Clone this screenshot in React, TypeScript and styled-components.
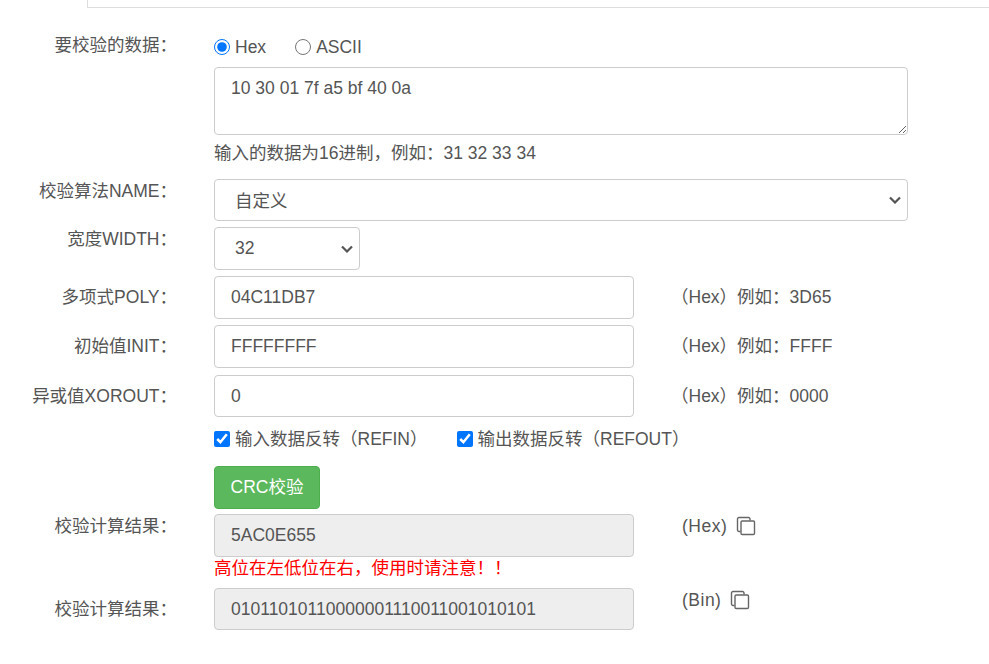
import React from "react";
import styled, { createGlobalStyle } from "styled-components";

const Global = createGlobalStyle`
  html, body { margin: 0; padding: 0; background: #fff; }
  body {
    font-family: "Liberation Sans", "Noto Sans CJK SC", sans-serif;
    font-size: 17.5px;
    color: #555;
    overflow: hidden;
  }
`;

const Page = styled.div`
  width: 989px;
  height: 664px;
  overflow: hidden;
`;

const TopPanel = styled.div`
  height: 7px;
  margin-left: 87px;
  border: 1px solid #ddd;
  border-top: none;
  border-right: none;
`;

const Form = styled.form`
  display: flex;
  flex-direction: column;
  padding-top: 26px;
`;

const Row = styled.div<{ $h: number; $mb?: number }>`
  display: grid;
  grid-template-columns: 177px 694px;
  column-gap: 37px;
  height: ${(p) => p.$h}px;
  margin-bottom: ${(p) => p.$mb ?? 0}px;
`;

const Label = styled.label<{ $top?: number }>`
  text-align: right;
  line-height: 22px;
  padding-top: ${(p) => p.$top ?? 0}px;
  white-space: nowrap;
`;

const Field = styled.div`
  display: flex;
  align-items: flex-start;
  min-width: 0;
`;

const Option = styled.label<{ $gap: number }>`
  display: inline-flex;
  align-items: center;
  line-height: 22px;
  margin-right: ${(p) => p.$gap}px;
  white-space: nowrap;
`;

const RadioField = styled(Field)`
  padding-top: 2px;
`;

const Radio = styled.input.attrs({ type: "radio" })`
  width: 16px;
  height: 16px;
  margin: 0 5px 0 0;
  flex: none;
`;

const Check = styled.input.attrs({ type: "checkbox" })`
  width: 16px;
  height: 16px;
  margin: 0 5px 0 0;
  flex: none;
`;

const control = `
  box-sizing: border-box;
  border: 1px solid #ccc;
  border-radius: 4px;
  font: inherit;
  color: #555;
  background-color: #fff;
  outline: none;
`;

const TextArea = styled.textarea`
  ${control}
  width: 694px;
  height: 68px;
  padding: 7px 16px;
  line-height: 26px;
  resize: vertical;
  display: block;
`;

const chevron =
  "url(\"data:image/svg+xml;utf8,<svg xmlns='http://www.w3.org/2000/svg' width='12' height='8' viewBox='0 0 12 8'><path d='M1 1.500l5 5 5-5' fill='none' stroke='%23555' stroke-width='2.200'/></svg>\")";

const Select = styled.select<{ $w: number; $shift: number }>`
  ${control}
  appearance: none;
  width: ${(p) => p.$w}px;
  height: 100%;
  padding: ${(p) => (p.$shift > 0 ? p.$shift : 0)}px 24px ${(p) => (p.$shift < 0 ? -p.$shift : 0)}px 20px;
  background-image: ${chevron};
  background-repeat: no-repeat;
  background-position: right 6px center;
`;

const Input = styled.input`
  ${control}
  width: 420px;
  height: 100%;
  padding: 0 16px;
`;

const ResultInput = styled(Input)`
  background-color: #eee;
`;

const Hint = styled.span`
  margin-left: 37px;
  line-height: 42px;
  white-space: nowrap;
`;

const ResultHint = styled.span<{ $gap: number }>`
  display: inline-flex;
  align-items: center;
  gap: ${(p) => p.$gap}px;
  margin-left: 48px;
  margin-top: 1px;
  line-height: 22px;
  letter-spacing: 0.5px;
  white-space: nowrap;
`;

const HelpText = styled.div`
  padding-top: 7px;
  line-height: 22px;
  white-space: nowrap;
`;

const Warn = styled.div`
  line-height: 22px;
  color: #f00;
  white-space: nowrap;
`;

const Button = styled.button`
  box-sizing: border-box;
  width: 106px;
  height: 43px;
  border: 1px solid #4cae4c;
  border-radius: 4px;
  background: #5cb85c;
  color: #fff;
  font: inherit;
  padding: 0 0 4px;
`;

const CopyIcon = () => (
  <svg width="20" height="20" viewBox="0 0 20 20" fill="none" stroke="#666" strokeWidth="1.4">
    <path d="M4.5 15.5H3a1.5 1.5 0 0 1-1.500-1.500V3A1.500 1.500 0 0 1 3 1.500h9.500A1.500 1.500 0 0 1 14 3v1.500" />
    <rect x="5" y="5" width="13.500" height="13.500" rx="1.200" />
  </svg>
);

export default function App() {
  return (
    <Page>
      <Global />
      <TopPanel />
      <Form>
        <Row $h={33}>
          <Label>要校验的数据：</Label>
          <RadioField>
            <Option $gap={29}>
              <Radio name="fmt" defaultChecked />
              Hex
            </Option>
            <Option $gap={0}>
              <Radio name="fmt" />
              ASCII
            </Option>
          </RadioField>
        </Row>
        <Row $h={68}>
          <span />
          <TextArea defaultValue="10 30 01 7f a5 bf 40 0a" />
        </Row>
        <Row $h={44}>
          <span />
          <HelpText>输入的数据为16进制，例如：31 32 33 34</HelpText>
        </Row>
        <Row $h={42} $mb={6}>
          <Label $top={1}>校验算法NAME：</Label>
          <Select $w={694} $shift={1} defaultValue="custom">
            <option value="custom">自定义</option>
          </Select>
        </Row>
        <Row $h={43} $mb={6}>
          <Label $top={1}>宽度WIDTH：</Label>
          <Select $w={146} $shift={-1} defaultValue="32">
            <option value="32">32</option>
          </Select>
        </Row>
        <Row $h={43} $mb={6}>
          <Label $top={10}>多项式POLY：</Label>
          <Field>
            <Input defaultValue="04C11DB7" />
            <Hint>（Hex）例如：3D65</Hint>
          </Field>
        </Row>
        <Row $h={43} $mb={7}>
          <Label $top={10}>初始值INIT：</Label>
          <Field>
            <Input defaultValue="FFFFFFFF" />
            <Hint>（Hex）例如：FFFF</Hint>
          </Field>
        </Row>
        <Row $h={42} $mb={11}>
          <Label $top={10}>异或值XOROUT：</Label>
          <Field>
            <Input defaultValue="0" />
            <Hint>（Hex）例如：0000</Hint>
          </Field>
        </Row>
        <Row $h={38}>
          <span />
          <Field>
            <Option $gap={29}>
              <Check defaultChecked />
              输入数据反转（REFIN）
            </Option>
            <Option $gap={0}>
              <Check defaultChecked />
              输出数据反转（REFOUT）
            </Option>
          </Field>
        </Row>
        <Row $h={43} $mb={5}>
          <span />
          <Field>
            <Button type="button">CRC校验</Button>
          </Field>
        </Row>
        <Row $h={43}>
          <Label $top={1}>校验计算结果：</Label>
          <Field>
            <ResultInput readOnly defaultValue="5AC0E655" />
            <ResultHint $gap={9}>
              (Hex)
              <CopyIcon />
            </ResultHint>
          </Field>
        </Row>
        <Row $h={31}>
          <span />
          <Warn>高位在左低位在右，使用时请注意！！</Warn>
        </Row>
        <Row $h={42}>
          <Label $top={10}>校验计算结果：</Label>
          <Field>
            <ResultInput readOnly defaultValue="01011010110000001110011001010101" />
            <ResultHint $gap={9}>
              (Bin)
              <CopyIcon />
            </ResultHint>
          </Field>
        </Row>
      </Form>
    </Page>
  );
}
